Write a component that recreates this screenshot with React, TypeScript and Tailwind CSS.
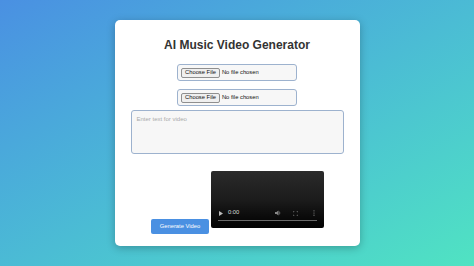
import { useState } from "react"

function FileField() {
  return (
    <label className="flex items-center w-[120px] h-[17px] px-[3px] bg-[#f7f7f7] border-[1.5px] border-[#9db2ce] rounded-[3px] cursor-pointer">
      <span className="h-[10px] px-[3px] flex items-center bg-[#efefef] border border-[#8f8f8f] rounded-[2px] text-[5.8px] leading-none text-[#111]">
        Choose File
      </span>
      <span className="ml-[2px] text-[5.8px] leading-none text-[#111]">No file chosen</span>
      <input type="file" className="hidden" />
    </label>
  )
}

function VideoBox() {
  return (
    <div className="w-[113px] h-[57px] rounded-[2px] bg-gradient-to-b from-[#2b2b2b] via-[#1c1c1c] to-[#030303] flex flex-col justify-end px-[7px] pb-[7px]">
      <div className="flex items-center h-[8px]">
        <svg width="4" height="5" viewBox="0 0 4 5" className="ml-[1px]">
          <path d="M0 0 L4 2.5 L0 5 Z" fill="#bbb" />
        </svg>
        <span className="ml-[5px] text-[5.8px] leading-none text-[#ddd]">0:00</span>
        <svg width="6" height="6" viewBox="0 0 6 6" className="ml-auto">
          <path d="M0 2 H1.5 L3.5 0.5 V5.5 L1.5 4 H0 Z" fill="#888" />
          <path d="M4.3 1.5 Q5.5 3 4.3 4.5" stroke="#888" strokeWidth="0.7" fill="none" />
        </svg>
        <svg width="5" height="5" viewBox="0 0 5 5" className="ml-[12px]">
          <path d="M0 1.5 V0 H1.5 M3.5 0 H5 V1.5 M5 3.5 V5 H3.5 M1.5 5 H0 V3.5" stroke="#888" strokeWidth="0.7" fill="none" />
        </svg>
        <svg width="2" height="6" viewBox="0 0 2 6" className="ml-[15px] mr-[2px]">
          <circle cx="1" cy="0.8" r="0.6" fill="#888" />
          <circle cx="1" cy="3" r="0.6" fill="#888" />
          <circle cx="1" cy="5.2" r="0.6" fill="#888" />
        </svg>
      </div>
      <div className="mt-[3px] h-[1px] bg-[#6a6a6a]" />
    </div>
  )
}

export default function App() {
  const [text, setText] = useState("")

  return (
    <div
      className="w-[474px] h-[266px] flex items-start justify-center pt-[20px] bg-gradient-to-br from-[#4a90e2] to-[#50e3c2]"
      style={{ fontFamily: '"Liberation Sans", Arial, sans-serif' }}
    >
      <div className="w-[245px] h-[226px] bg-white rounded-[5px] shadow-[0_2px_8px_rgba(0,0,0,0.25)] flex flex-col items-center pt-[17px]">
        <h1 className="text-[12px] leading-[17px] font-bold text-[#333]">AI Music Video Generator</h1>
        <div className="mt-[10px]">
          <FileField />
        </div>
        <div className="mt-[8px]">
          <FileField />
        </div>
        <textarea
          value={text}
          onChange={(e) => setText(e.target.value)}
          placeholder="Enter text for video"
          className="mt-[4px] w-[213px] h-[44px] px-[5px] py-[4px] bg-[#f7f7f7] border-[1.5px] border-[#9db2ce] rounded-[3px] text-[6px] leading-[9px] text-[#333] placeholder:text-[#aaa] resize-none outline-none"
        />
        <div className="mt-[17px] flex items-start gap-[2px] ml-[1px]">
          <button className="mt-[48px] w-[58px] h-[15px] bg-[#4a90e2] rounded-[2px] text-white text-[5.8px] leading-none">
            Generate Video
          </button>
          <VideoBox />
        </div>
      </div>
    </div>
  )
}
